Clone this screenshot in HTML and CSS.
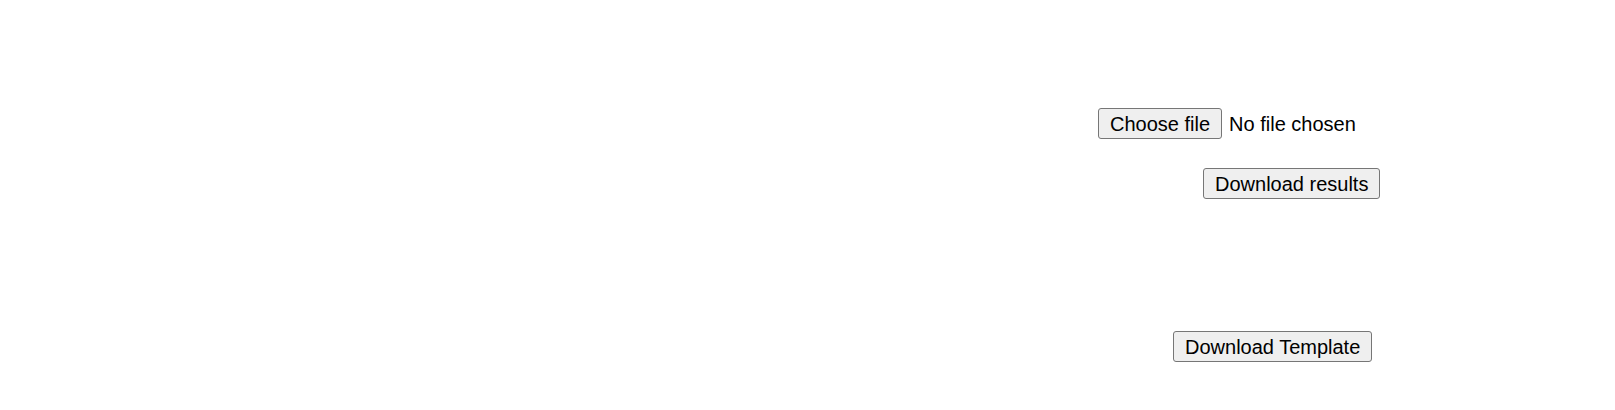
FILE: index.html
```html
<!DOCTYPE html>
<html>
<head>
<meta charset="utf-8">
<link rel="stylesheet" href="styles.css">
</head>
<body>
<main class="panel">
  <div class="row row-file">
    <label class="btn">Choose file</label>
    <span class="file-status">No file chosen</span>
  </div>
  <div class="row row-results">
    <button class="btn" type="button">Download results</button>
  </div>
  <div class="row row-template">
    <button class="btn" type="button">Download Template</button>
  </div>
</main>
</body>
</html>
```
FILE: styles.css
```css
html, body {
  margin: 0;
  padding: 0;
  background: #ffffff;
}
body {
  font-family: "Liberation Sans", Arial, sans-serif;
  font-size: 20px;
  color: #000000;
}
.panel {
  display: flex;
  flex-direction: column;
  align-items: flex-start;
  padding-top: 108px;
  padding-left: 1098px;
}
.row {
  display: flex;
  align-items: baseline;
}
.row-results {
  margin-top: 29px;
  margin-left: 105px;
}
.row-template {
  margin-top: 132px;
  margin-left: 75px;
}
.btn {
  font-family: "Liberation Sans", Arial, sans-serif;
  font-size: 20px;
  line-height: 23px;
  color: #000000;
  background: #efefef;
  border: 1px solid #767676;
  border-radius: 3px;
  padding: 4px 11px 2px;
  margin: 0;
  box-sizing: border-box;
  display: inline-block;
}
.file-status {
  margin-left: 7px;
  line-height: 23px;
}
```
